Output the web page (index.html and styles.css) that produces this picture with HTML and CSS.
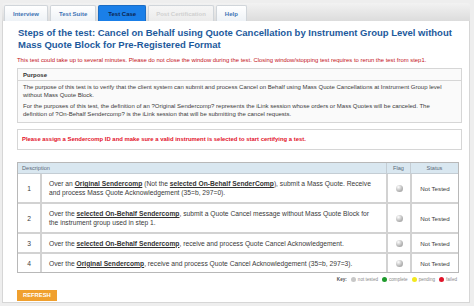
FILE: index.html
```html
<!DOCTYPE html>
<html>
<head>
<meta charset="utf-8">
<link rel="stylesheet" href="styles.css">
</head>
<body>
<div class="page">
  <div class="tabs">
    <div class="tab">Interview</div>
    <div class="tab">Test Suite</div>
    <div class="tab active">Test Case</div>
    <div class="tab disabled">Post Certification</div>
    <div class="tab">Help</div>
  </div>
  <div class="panel">
    <h1 class="title">Steps of the test: Cancel on Behalf using Quote Cancellation by Instrument Group Level without Mass Quote Block for Pre-Registered Format</h1>
    <p class="warn">This test could take up to several minutes. Please do not close the window during the test. Closing window/stopping test requires to rerun the test from step1.</p>
    <div class="purpose">
      <div class="purpose-head">Purpose</div>
      <div class="purpose-body">
        <p>The purpose of this test is to verify that the client system can submit and process Cancel on Behalf using Mass Quote Cancellations at Instrument Group level without Mass Quote Block.</p>
        <p>For the purposes of this test, the definition of an ?Original Sendercomp? represents the iLink session whose orders or Mass Quotes will be canceled. The definition of ?On-Behalf Sendercomp? is the iLink session that will be submitting the cancel requests.</p>
      </div>
    </div>
    <div class="alert">Please assign a Sendercomp ID and make sure a valid instrument is selected to start certifying a test.</div>
    <table class="steps">
      <thead>
        <tr><th colspan="2" class="th-desc">Description</th><th class="th-flag">Flag</th><th class="th-status">Status</th></tr>
      </thead>
      <tbody>
        <tr class="r-tall"><td class="num">1</td><td class="desc">Over an <u>Original Sendercomp</u> (Not the <u>selected On-Behalf SenderComp</u>), submit a Mass Quote. Receive and process Mass Quote Acknowledgement (35=b, 297=0).</td><td class="flag"><span class="dot"></span></td><td class="status">Not Tested</td></tr>
        <tr class="r-tall"><td class="num">2</td><td class="desc">Over the <u>selected On-Behalf Sendercomp</u>, submit a Quote Cancel message without Mass Quote Block for the instrument group used in step 1.</td><td class="flag"><span class="dot"></span></td><td class="status">Not Tested</td></tr>
        <tr class="r-short"><td class="num">3</td><td class="desc">Over the <u>selected On-Behalf Sendercomp</u>, receive and process Quote Cancel Acknowledgement.</td><td class="flag"><span class="dot"></span></td><td class="status">Not Tested</td></tr>
        <tr class="r-short"><td class="num">4</td><td class="desc">Over the <u>Original Sendercomp</u>, receive and process Quote Cancel Acknowledgement (35=b, 297=3).</td><td class="flag"><span class="dot"></span></td><td class="status">Not Tested</td></tr>
      </tbody>
    </table>
    <div class="key">
      <b>Key:</b>
      <span class="k"><span class="kd gray"></span>not tested</span>
      <span class="k"><span class="kd green"></span>complete</span>
      <span class="k"><span class="kd yellow"></span>pending</span>
      <span class="k"><span class="kd red"></span>failed</span>
    </div>
    <div class="refresh">REFRESH</div>
  </div>
</div>
</body>
</html>
```
FILE: styles.css
```css
html, body {
  margin: 0;
  padding: 0;
  background: #eeeeee;
  font-family: "Liberation Sans", Arial, sans-serif;
}
.page {
  width: 468px;
  padding: 3px 0 0 2px;
}
.tabs {
  display: flex;
  gap: 2px;
  height: 18px;
  padding: 2px 0 0 2px;
  background: linear-gradient(#f2f2f2, #dcdcdc);
  border-radius: 3px 3px 0 0;
  box-sizing: border-box;
}
.tab {
  font-size: 6px;
  font-weight: bold;
  color: #3f74b4;
  background: linear-gradient(#ffffff, #eef2f6);
  border: 1px solid #d0d5da;
  border-bottom: none;
  border-radius: 2px 2px 0 0;
  padding: 0 8px;
  display: flex;
  align-items: center;
  height: 16px;
  box-sizing: border-box;
}
.tab.active {
  background: #1a7fe8;
  color: #0c2550;
  border-color: #1a6cc4;
  padding: 0 9px;
}
.tab.disabled {
  color: #d0d0d0;
  background: linear-gradient(#f6f6f6, #ebebeb);
  padding: 0 7px;
}
.panel {
  background: #fff;
  border: 1px solid #d6d6d6;
  border-top: none;
  padding: 6px 7px 4px 14px;
  height: 282px;
  box-sizing: border-box;
}
.title {
  margin: 0 0 0 1px;
  font-size: 9.5px;
  line-height: 12px;
  font-weight: bold;
  color: #1d5a9c;
  width: 442px;
}
.warn {
  margin: 5px 0 4px 0;
  font-size: 5.9px;
  color: #c4121a;
  line-height: 8px;
}
.purpose {
  border: 1px solid #d6d6d6;
  background: #fafafa;
  font-size: 6px;
  color: #3a3a3a;
}
.purpose-head {
  font-weight: bold;
  padding: 2px 5px 1px;
  line-height: 8px;
  border-bottom: 1px solid #d6d6d6;
  color: #333;
}
.purpose-body {
  padding: 2px 9px 4px 5px;
}
.purpose-body p {
  margin: 0 0 3px 0;
  line-height: 8px;
}
.purpose-body p:last-child {
  margin-bottom: 0;
}
.alert {
  margin-top: 6px;
  border: 1px solid #d6d6d6;
  font-size: 5.9px;
  font-weight: bold;
  color: #e2112a;
  padding: 6px 4px 6px;
  line-height: 7px;
}
.steps {
  margin-top: 12px;
  border-collapse: separate;
  border-spacing: 0;
  width: 442px;
  border: 1px solid #b8b8b8;
  font-size: 6.7px;
  color: #3a3a3a;
}
.steps th {
  background: #d9e7f0;
  font-weight: normal;
  color: #5a6a78;
  font-size: 5.6px;
  height: 10px;
  padding: 0 4px;
  text-align: left;
  border-bottom: 1px solid #c4cdd4;
}
.steps th.th-flag, .steps th.th-status {
  text-align: center;
  border-left: 1px solid #c4cdd4;
}
.steps td {
  border-top: 2px solid #d2d2d2;
  padding: 0 6px;
  line-height: 9px;
}
.steps tbody tr:first-child td {
  border-top: none;
}
.steps u {
  font-weight: bold;
  color: #333;
}
.r-tall td { height: 28px; }
.r-short td { height: 18px; }
.num {
  width: 10px;
  text-align: center;
  border-right: 2px solid #d2d2d2;
}
.steps td.desc {
  padding: 0 6px 0 7px;
}
.flag {
  width: 10px;
  text-align: center;
  border-left: 2px solid #d2d2d2;
}
.status {
  width: 34px;
  text-align: center;
  border-left: 2px solid #d2d2d2;
  font-size: 6.2px;
}
.dot {
  display: inline-block;
  width: 7px;
  height: 7px;
  border-radius: 50%;
  background: radial-gradient(circle at 35% 30%, #ffffff, #bcbcbc 55%, #8e8e8e);
  vertical-align: middle;
}
.key {
  display: flex;
  justify-content: flex-end;
  align-items: center;
  gap: 4px;
  width: 440px;
  margin-top: 3px;
  font-size: 4.6px;
  color: #8a8a8a;
  height: 7px;
}
.key b {
  color: #555;
}
.k {
  display: flex;
  align-items: center;
  gap: 2px;
}
.kd {
  display: inline-block;
  width: 5px;
  height: 5px;
  border-radius: 50%;
}
.kd.gray { background: #c8c8c8; }
.kd.green { background: #1e9a2c; }
.kd.yellow { background: #f2e81e; }
.kd.red { background: #e0142a; }
.refresh {
  display: inline-block;
  margin-top: 2px;
  background: #f0a02e;
  color: #fff;
  font-weight: bold;
  font-size: 5.8px;
  padding: 2px 6px;
  line-height: 7px;
}
```
